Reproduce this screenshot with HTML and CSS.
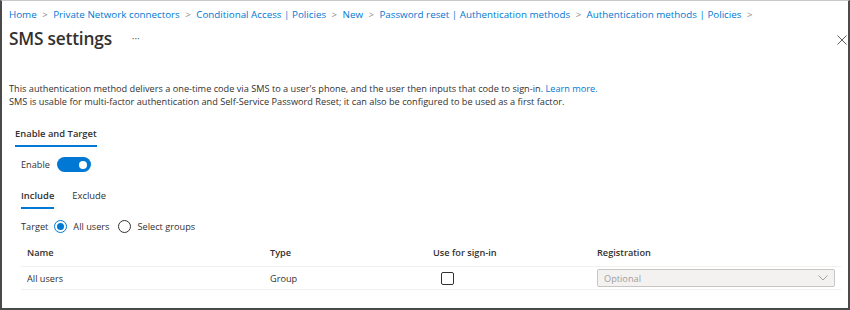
FILE: index.html
```html
<html lang="en">
  <head>
    <meta charset="UTF-8" />
    <title>SMS settings</title>
    <link rel="stylesheet" href="styles.css">
  </head>
  <body>
    <div class="frame">
      <nav class="crumbs">
        <a>Home</a><span class="sep">&gt;</span>
        <a>Private Network connectors</a><span class="sep">&gt;</span>
        <a>Conditional Access | Policies</a><span class="sep">&gt;</span>
        <a>New</a><span class="sep">&gt;</span>
        <a>Password reset | Authentication methods</a><span class="sep">&gt;</span>
        <a>Authentication methods | Policies</a><span class="sep">&gt;</span>
      </nav>
      <header class="head">
        <h1 class="title">SMS settings</h1>
        <span class="more">···</span>
        <svg class="close" width="10" height="10" viewBox="0 0 10 10">
          <path d="M0.5 0.5L9.5 9.5M9.5 0.5L0.5 9.5" stroke="#605e5c" stroke-width="1" fill="none" />
        </svg>
      </header>
      <div class="desc">
        <p>This authentication method delivers a one-time code via SMS to a user's phone, and the user then inputs that code to sign-in. <a>Learn more.</a></p>
        <p>SMS is usable for multi-factor authentication and Self-Service Password Reset; it can also be configured to be used as a first factor.</p>
      </div>
      <div class="tabs main-tabs">
        <span class="tab active">Enable and Target</span>
      </div>
      <section class="panel">
        <div class="enable">
          <span>Enable</span>
          <span class="toggle"><span class="knob"></span></span>
        </div>
        <div class="tabs sub-tabs">
          <span class="tab active">Include</span>
          <span class="tab">Exclude</span>
        </div>
        <div class="target">
          <span>Target</span>
          <label class="radio"><span class="dot checked"></span>All users</label>
          <label class="radio"><span class="dot"></span>Select groups</label>
        </div>
        <div class="table">
          <div class="row th">
            <span>Name</span><span>Type</span><span>Use for sign-in</span><span>Registration</span>
          </div>
          <div class="row">
            <span>All users</span>
            <span>Group</span>
            <span><span class="check"></span></span>
            <span class="select">
              Optional
              <svg width="10" height="6" viewBox="0 0 10 6">
                <path d="M0.5 0.5L5 5L9.5 0.5" stroke="#a19f9d" fill="none" />
              </svg>
            </span>
          </div>
        </div>
      </section>
    </div>
  </body>
</html>
```
FILE: styles.css
```css
body {
  margin: 0;
  font-family: "Open Sans", "Noto Sans", sans-serif;
  color: #323130;
  background: #fff;
}
.frame {
  box-sizing: border-box;
  height: 310px;
  width: 850px;
  border: 2px solid #4a4a4a;
  border-top: 1px solid #c8c8c8;
  padding: 0 0 0 7px;
}
a {
  color: #0078d4;
}
.crumbs {
  font-size: 9.8px;
  padding-top: 4px;
  height: 18px;
  display: flex;
  align-items: center;
  white-space: nowrap;
}
.crumbs .sep {
  color: #8a8886;
  margin: 0 5.5px;
  font-size: 9.5px;
}
.head {
  display: flex;
  align-items: center;
  height: 30px;
}
.title {
  font-size: 17.3px;
  font-weight: 600;
  margin: 0;
  letter-spacing: -0.2px;
}
.more {
  color: #605e5c;
  font-size: 10px;
  margin-left: 20px;
}
.close {
  margin-left: auto;
  margin-right: 1px;
  margin-top: 4px;
}
.desc {
  margin-top: 29px;
  font-size: 9.2px;
  line-height: 13px;
}
.desc p {
  margin: 0;
}
.tabs {
  display: flex;
  gap: 18px;
}
.tab {
  font-size: 9.4px;
  padding-bottom: 5px;
}
.tab.active {
  font-weight: 600;
  border-bottom: 2px solid #0078d4;
}
.main-tabs {
  margin: 19px 0 0 6px;
}
.panel {
  padding-left: 12px;
}
.enable {
  margin-top: 10px;
  display: flex;
  align-items: center;
  gap: 7px;
  font-size: 9.2px;
}
.toggle {
  width: 34px;
  height: 15px;
  border-radius: 8px;
  background: #0078d4;
  display: flex;
  align-items: center;
  justify-content: flex-end;
}
.knob {
  width: 8px;
  height: 8px;
  border-radius: 50%;
  background: #fff;
  margin-right: 4px;
}
.sub-tabs {
  margin-top: 17px;
}
.target {
  margin-top: 11px;
  display: flex;
  align-items: center;
  gap: 6px;
  font-size: 9.2px;
}
.radio {
  display: flex;
  align-items: center;
  gap: 6px;
  margin-right: 3px;
}
.dot {
  box-sizing: border-box;
  width: 13px;
  height: 13px;
  border-radius: 50%;
  border: 1px solid #323130;
  display: flex;
  align-items: center;
  justify-content: center;
}
.dot.checked {
  border-color: #0078d4;
}
.dot.checked::after {
  content: "";
  width: 7px;
  height: 7px;
  border-radius: 50%;
  background: #0078d4;
}
.table {
  margin-top: 6px;
  width: 820px;
  font-size: 9.2px;
}
.row {
  display: grid;
  grid-template-columns: 243px 163px 164px 238px;
  align-items: center;
  height: 22px;
  padding-left: 6px;
  border-bottom: 1px solid #f1f0ef;
}
.th {
  font-weight: 600;
  height: 27px;
}
.check {
  display: block;
  box-sizing: border-box;
  width: 13px;
  height: 13px;
  border: 1px solid #323130;
  border-radius: 2px;
  margin-left: 8px;
}
.select {
  box-sizing: border-box;
  height: 18px;
  border: 1px solid #c8c6c4;
  border-radius: 2px;
  background: #f3f2f1;
  color: #a19f9d;
  display: flex;
  align-items: center;
  justify-content: space-between;
  padding: 0 6px;
}
```
